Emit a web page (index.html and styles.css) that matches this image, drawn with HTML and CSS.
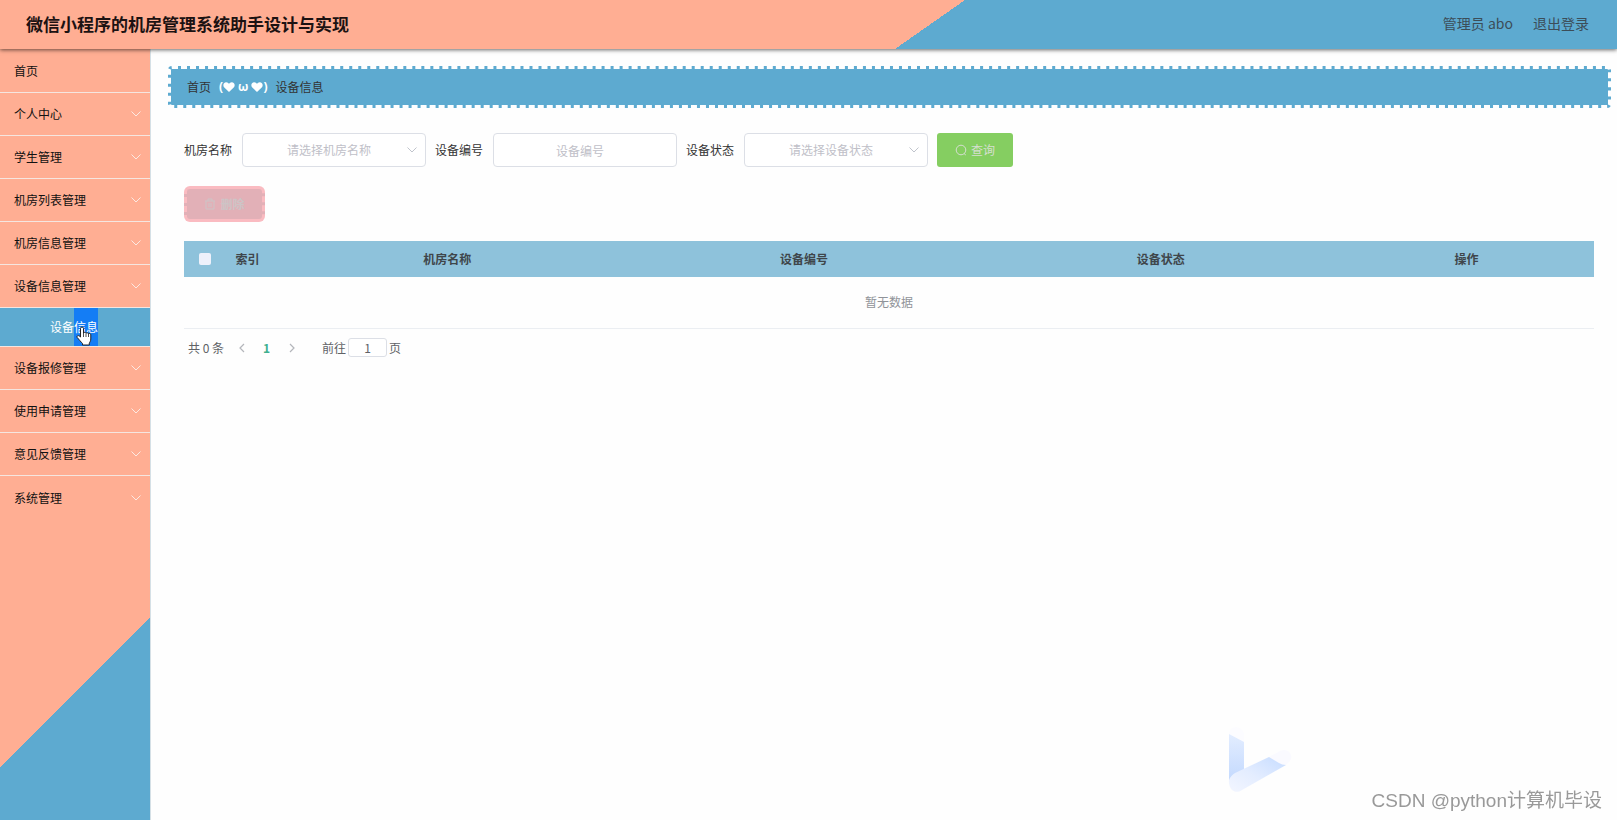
FILE: index.html
```
<!DOCTYPE html>
<html lang="zh-CN">
<head>
  <meta charset="UTF-8" />
  <meta name="viewport" content="width=device-width, initial-scale=1" />
  <title>微信小程序的机房管理系统助手设计与实现</title>
  <link rel="stylesheet" href="styles.css">
</head>
<body>
  <svg class="sprite" aria-hidden="true">
    <symbol id="down" viewBox="0 0 12 12"><path d="M1.500 3.500 6 8l4.500-4.500" fill="none" stroke="currentColor"/></symbol>
    <symbol id="left" viewBox="0 0 12 12"><path d="M8 2 4 6l4 4" fill="none" stroke="currentColor" stroke-width="1.200"/></symbol>
    <symbol id="right" viewBox="0 0 12 12"><path d="M4 2l4 4-4 4" fill="none" stroke="currentColor" stroke-width="1.200"/></symbol>
    <symbol id="heart" viewBox="0 0 12 12"><path d="M6 11 1.300 6.500C-.6 4.500.5 1.300 3.200 1.300 4.500 1.300 5.500 2 6 3c.5-1 1.500-1.700 2.800-1.700 2.700 0 3.800 3.200 1.900 5.200z" fill="currentColor"/></symbol>
  </svg>

  <header class="header">
    <h1>微信小程序的机房管理系统助手设计与实现</h1>
    <div class="user">
      <span>管理员 abo</span>
      <a href="#logout">退出登录</a>
    </div>
  </header>

  <div class="container">
    <nav class="menu">
      <a class="menu-item" href="#home">首页</a>
      <button class="menu-item" type="button">个人中心<svg class="arrow"><use href="#down"/></svg></button>
      <button class="menu-item" type="button">学生管理<svg class="arrow"><use href="#down"/></svg></button>
      <button class="menu-item" type="button">机房列表管理<svg class="arrow"><use href="#down"/></svg></button>
      <button class="menu-item" type="button">机房信息管理<svg class="arrow"><use href="#down"/></svg></button>
      <button class="menu-item" type="button">设备信息管理<svg class="arrow"><use href="#down"/></svg></button>
      <a class="submenu-item" href="#device">设备<span class="selected">信息</span>
        <svg class="cursor" viewBox="0 0 16 20"><path d="M4.500 11V2.500a1.500 1.500 0 0 1 3 0V7a1.400 1.400 0 0 1 2.500.3 1.400 1.400 0 0 1 2.500.6 1.300 1.300 0 0 1 2.300 1V13c0 2-1 3-1.500 4.200V19H6.500v-1.500C5 16 3 13.500 1.200 11.500c-.8-1.300.8-2.500 2-1.600z" fill="#fff" stroke="#222"/><path d="M7.500 7v4M10 7.500V11M12.500 8v3" fill="none" stroke="#222" stroke-width=".8"/></svg>
      </a>
      <button class="menu-item" type="button">设备报修管理<svg class="arrow"><use href="#down"/></svg></button>
      <button class="menu-item" type="button">使用申请管理<svg class="arrow"><use href="#down"/></svg></button>
      <button class="menu-item" type="button">意见反馈管理<svg class="arrow"><use href="#down"/></svg></button>
      <button class="menu-item" type="button">系统管理<svg class="arrow"><use href="#down"/></svg></button>
    </nav>

    <main class="main">
      <div class="breadcrumb">
        <a href="#home">首页</a>
        <span class="face">(<svg><use href="#heart"/></svg><span>ω</span><svg><use href="#heart"/></svg>)</span>
        <span>设备信息</span>
      </div>

      <div class="content">
        <form class="search">
          <div class="field">
            <label for="room">机房名称</label>
            <div class="select">
              <select id="room"><option>请选择机房名称</option></select>
              <svg><use href="#down"/></svg>
            </div>
          </div>
          <div class="field">
            <label for="number">设备编号</label>
            <input id="number" type="text" placeholder="设备编号">
          </div>
          <div class="field">
            <label for="status">设备状态</label>
            <div class="select">
              <select id="status"><option>请选择设备状态</option></select>
              <svg><use href="#down"/></svg>
            </div>
          </div>
          <button class="btn-search" type="button">
            <svg viewBox="0 0 12 12"><circle cx="6" cy="6" r="4.800" fill="none" stroke="currentColor"/><path d="M9 9.500l1.800 1.500" stroke="currentColor"/></svg>
            查询
          </button>
        </form>

        <button class="btn-delete" type="button" disabled>
          <svg viewBox="0 0 12 12"><path d="M1 3h10M4 3V1h4v2M2 3v8h8V3M5 5v4M7 5v4" fill="none" stroke="currentColor"/></svg>
          删除
        </button>

        <table>
          <thead>
            <tr>
              <th class="col-check"><input type="checkbox" aria-label="全选"></th>
              <th class="col-index">索引</th>
              <th>机房名称</th>
              <th>设备编号</th>
              <th>设备状态</th>
              <th class="col-action">操作</th>
            </tr>
          </thead>
          <tbody>
            <tr><td colspan="6">暂无数据</td></tr>
          </tbody>
        </table>

        <div class="pagination">
          <span>共 0 条</span>
          <button type="button" aria-label="上一页"><svg><use href="#left"/></svg></button>
          <button class="current" type="button">1</button>
          <button type="button" aria-label="下一页"><svg><use href="#right"/></svg></button>
          <label class="jump">前往 <input type="text" value="1"> 页</label>
        </div>
      </div>
    </main>
  </div>

  <svg class="logo" viewBox="0 0 64 68" aria-hidden="true">
    <defs>
      <linearGradient id="bar" x1="0" y1="0" x2="0" y2="1">
        <stop offset="0" stop-color="#e3edff"/><stop offset="1" stop-color="#c3d9fe"/>
      </linearGradient>
      <linearGradient id="arm" x1="0" y1="1" x2="1" y2="0">
        <stop offset="0" stop-color="#f3f6ff"/><stop offset=".45" stop-color="#e4edff"/><stop offset="1" stop-color="#c6dcff"/>
      </linearGradient>
    </defs>
    <path d="M1 8C1 4 4 1 8 1s8 4 8 8v8L1 8z" fill="#fcfcff"/>
    <path d="M1 8l15 8v29L1 55z" fill="url(#bar)"/>
    <path d="M41 31l11-6c8-4 15 5 9 11l-3 3q-3 1-6-1z" fill="#fafaff"/>
    <path d="M1 54c1-3 3-5 6-7l34-16 10 6q3 2 7 2L14 64C7 69 0 63 1 54z" fill="url(#arm)"/>
  </svg>
  <div class="watermark">CSDN @python计算机毕设</div>
</body>
</html>
```
FILE: styles.css
```
* {
  box-sizing: border-box;
}

body {
  margin: 0;
  min-height: 100vh;
  display: flex;
  flex-direction: column;
  font-family: "Noto Sans CJK SC", sans-serif;
  font-size: 12px;
  line-height: 18px;
  color: #333;
  background: #fefefe;
}

button, input, select {
  font: inherit;
  color: inherit;
}

button {
  border: 0;
  background: none;
  padding: 0;
}

a {
  color: inherit;
  text-decoration: none;
}

svg {
  width: 12px;
  height: 12px;
  flex-shrink: 0;
}

.sprite {
  display: none;
}

.header {
  position: relative;
  z-index: 1;
  height: 49px;
  padding: 0 28px 2px 26px;
  display: flex;
  align-items: center;
  justify-content: space-between;
  background: linear-gradient(145deg, #ffae93 57.2%, #5daad0 57.2%);
  box-shadow: 0 1px 4px rgba(0, 0, 0, 0.6);
}

h1 {
  margin: 0;
  font-size: 17px;
  line-height: 24px;
  color: #1c1212;
}

.user {
  display: flex;
  gap: 20px;
  font-size: 14px;
  padding-bottom: 2px;
  color: #3c4d58;
}

.container {
  flex: 1;
  display: flex;
}

.menu {
  width: 151px;
  flex-shrink: 0;
  padding-top: 1px;
  display: flex;
  flex-direction: column;
  border-right: 1px solid #d5e0e6;
  background: linear-gradient(135deg, #ffae93 78%, #5daad0 78%);
}

.menu-item {
  height: 43px;
  padding: 0 8px 0 14px;
  display: flex;
  align-items: center;
  justify-content: space-between;
  border-bottom: 1px solid #f5e6e0;
  color: #111;
}

.menu-item:last-child {
  border-bottom: 0;
}

.arrow {
  color: #fbe9e2;
}

.submenu-item {
  position: relative;
  height: 39px;
  padding-left: 50px;
  line-height: 38px;
  color: #fff;
  background: #5daad0;
  border-bottom: 1px solid #f5e6e0;
}

.selected {
  display: inline-block;
  background: #147df5;
}

.cursor {
  position: absolute;
  left: 76px;
  top: 18px;
  width: 16px;
  height: 20px;
}

.main {
  flex: 1;
  min-width: 0;
  padding: 17px 6px 0 17px;
}

.breadcrumb {
  height: 42px;
  padding: 0 16px;
  display: flex;
  align-items: center;
  gap: 8px;
  border: 3px dashed #fefefe;
  border-radius: 4px;
  background: #5daad0;
}

.face {
  display: flex;
  align-items: center;
  font-family: "Open Sans", sans-serif;
  font-weight: bold;
  color: #fff;
}

.face span {
  margin: 0 3px;
}

.content {
  padding: 25px 17px 0 16px;
}

.search {
  display: flex;
  align-items: center;
  gap: 9px;
}

.field {
  display: flex;
  align-items: center;
  gap: 10px;
}

.field input,
.field select {
  width: 184px;
  height: 34px;
  padding: 0 25px 0 15px;
  border: 1px solid #dcdfe6;
  border-radius: 4px;
  background: #fff;
  text-align: center;
}

.field select {
  appearance: none;
  text-align-last: center;
  color: #c0c0c8;
}

.field input::placeholder {
  color: #c0c0c8;
}

.select {
  position: relative;
  display: flex;
}

.select svg {
  position: absolute;
  right: 8px;
  top: 11px;
  color: #c0c4cc;
  pointer-events: none;
}

.btn-search {
  width: 76px;
  height: 34px;
  display: flex;
  align-items: center;
  justify-content: center;
  gap: 4px;
  border-radius: 3px;
  color: #d5dfd0;
  background: #85ce61;
}

.btn-delete {
  width: 81px;
  height: 36px;
  margin: 19px 0;
  display: flex;
  align-items: center;
  justify-content: center;
  gap: 4px;
  border: 3px solid #fabbc1;
  border-left-style: dashed;
  border-right-style: dashed;
  border-radius: 6px;
  font-weight: bold;
  color: #cdc4c6;
  background: #e2b0b7;
}

table {
  width: 100%;
  table-layout: fixed;
  border-collapse: collapse;
}

th {
  height: 36px;
  padding: 0;
  color: #3f464b;
  background: #8ec2db;
}

.col-check {
  width: 42px;
}

.col-index {
  width: 43px;
}

.col-action {
  width: 255px;
}

th input {
  appearance: none;
  display: block;
  width: 12px;
  height: 12px;
  margin: 0 auto;
  border-radius: 2px;
  background: #eef1fb;
}

td {
  height: 51px;
  padding: 0;
  text-align: center;
  color: #909399;
  border-bottom: 1px solid #ebeef2;
}

.pagination {
  padding: 9px 4px;
  display: flex;
  align-items: center;
  color: #606266;
}

.pagination button {
  width: 25px;
  height: 20px;
  display: flex;
  align-items: center;
  justify-content: center;
  color: #b4b6bb;
}

.pagination span {
  margin-right: 5px;
}

.pagination .current {
  font-weight: bold;
  color: #3fb08f;
}

.jump {
  margin-left: 18px;
  display: flex;
  align-items: center;
  gap: 2px;
}

.jump input {
  width: 39px;
  height: 19px;
  padding: 0;
  border: 1px solid #dcdfe6;
  border-radius: 3px;
  background: #fff;
  text-align: center;
}

.logo {
  position: fixed;
  right: 325px;
  bottom: 26px;
  width: 64px;
  height: 68px;
}

.watermark {
  position: fixed;
  right: 15px;
  bottom: 5px;
  font-family: "Liberation Sans", "Noto Sans CJK SC", sans-serif;
  font-size: 19px;
  line-height: 28px;
  color: #999;
}
```
